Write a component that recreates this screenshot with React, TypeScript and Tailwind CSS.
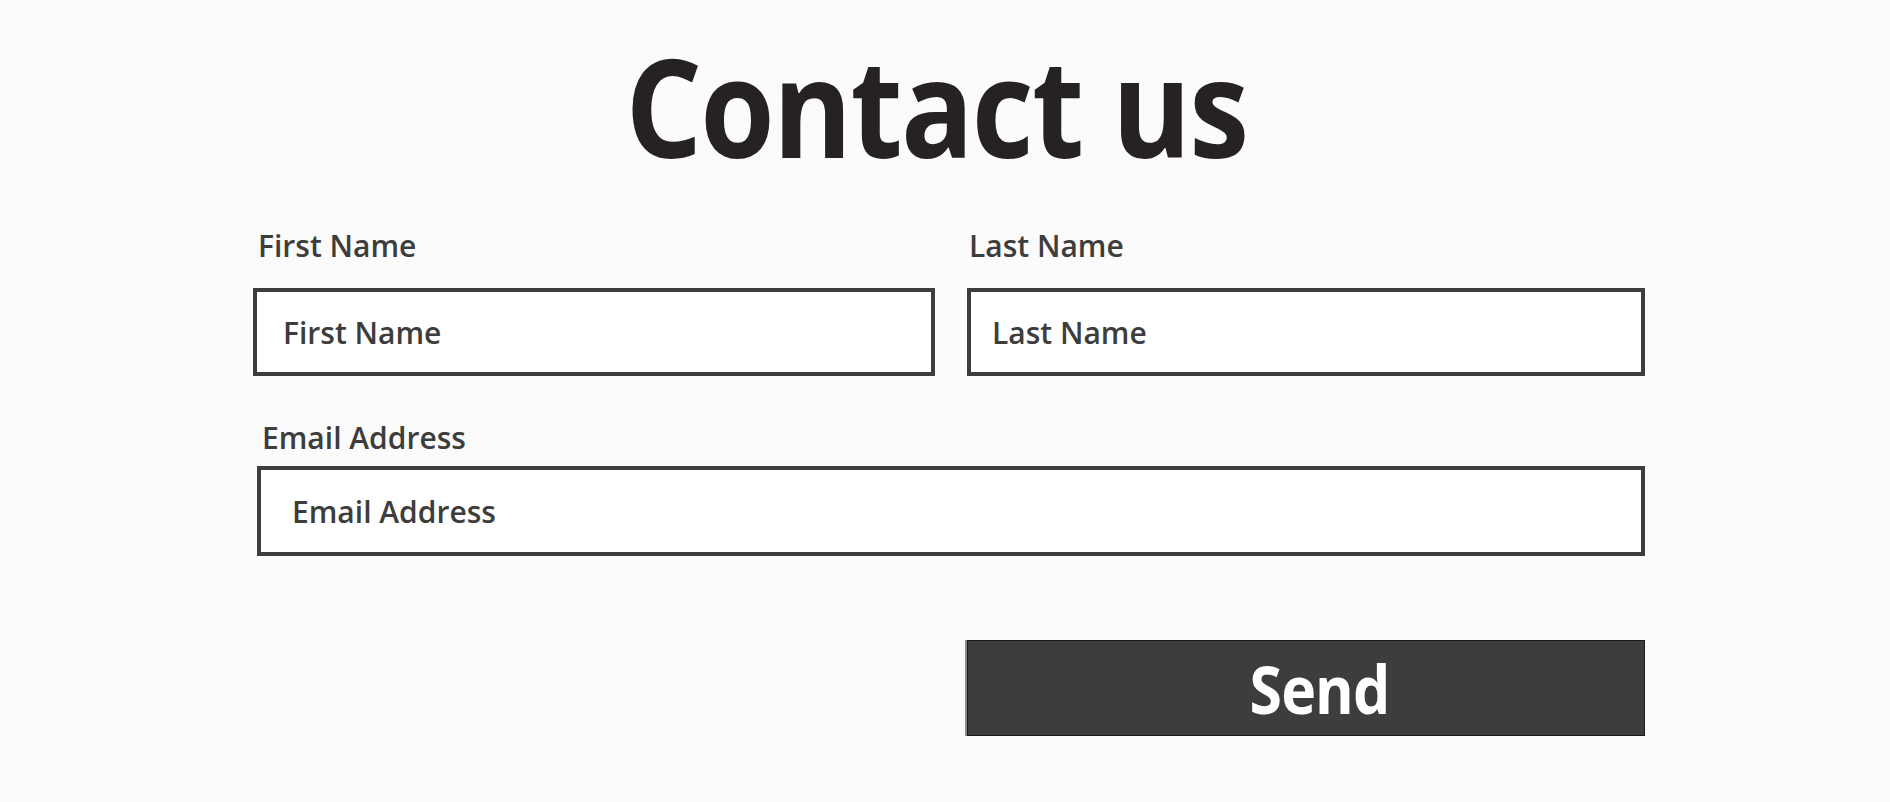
export default function App() {
  return (
    <div className="min-h-screen w-full bg-[#fbfbfb] font-['Open_Sans',sans-serif] text-[#3d3d3d]">
      {/* Heading */}
      <div className="flex justify-center pt-[38px] pr-[18px]">
        <h1 className="inline-block origin-center scale-x-[0.885] text-[136px] font-[750] leading-none tracking-[-2px] text-[#262221]">
          Contact us
        </h1>
      </div>

      <form className="ml-[253px] mt-[57px] flex w-[1392px] flex-col">
        {/* Name row */}
        <div className="flex gap-[32px]">
          <label className="flex w-[682px] flex-col">
            <span className="pl-[5px] text-[30px] font-semibold leading-none">First Name</span>
            <input
              type="text"
              placeholder="First Name"
              className="mt-[27px] h-[88px] w-full border-4 border-[#3d3d3d] bg-white px-[26px] text-[30px] font-semibold text-[#3d3d3d] outline-none placeholder:text-[#3d3d3d]"
            />
          </label>
          <label className="flex w-[678px] flex-col">
            <span className="pl-[2px] text-[30px] font-semibold leading-none">Last Name</span>
            <input
              type="text"
              placeholder="Last Name"
              className="mt-[27px] h-[88px] w-full border-4 border-[#3d3d3d] bg-white px-[21px] text-[30px] font-semibold text-[#3d3d3d] outline-none placeholder:text-[#3d3d3d]"
            />
          </label>
        </div>

        {/* Email */}
        <label className="ml-[4px] mt-[47px] flex w-[1388px] flex-col">
          <span className="pl-[5px] text-[30px] font-semibold leading-none">Email Address</span>
          <input
            type="email"
            placeholder="Email Address"
            className="mt-[13px] h-[90px] w-full border-4 border-[#3d3d3d] bg-white px-[31px] text-[30px] font-semibold text-[#3d3d3d] outline-none placeholder:text-[#3d3d3d]"
          />
        </label>

        {/* Send */}
        <div className="mt-[84px] flex justify-end">
          <button
            type="button"
            className="flex h-[96px] w-[678px] items-center justify-center border border-[#1a1a1a] bg-[#3d3d3d] pl-[27px] shadow-[-2px_0_0_#8a8a8a]"
          >
            <span className="inline-block origin-center scale-x-[0.88] text-[67px] font-[750] leading-none tracking-[-1px] text-white">
              Send
            </span>
          </button>
        </div>
      </form>
    </div>
  );
}
